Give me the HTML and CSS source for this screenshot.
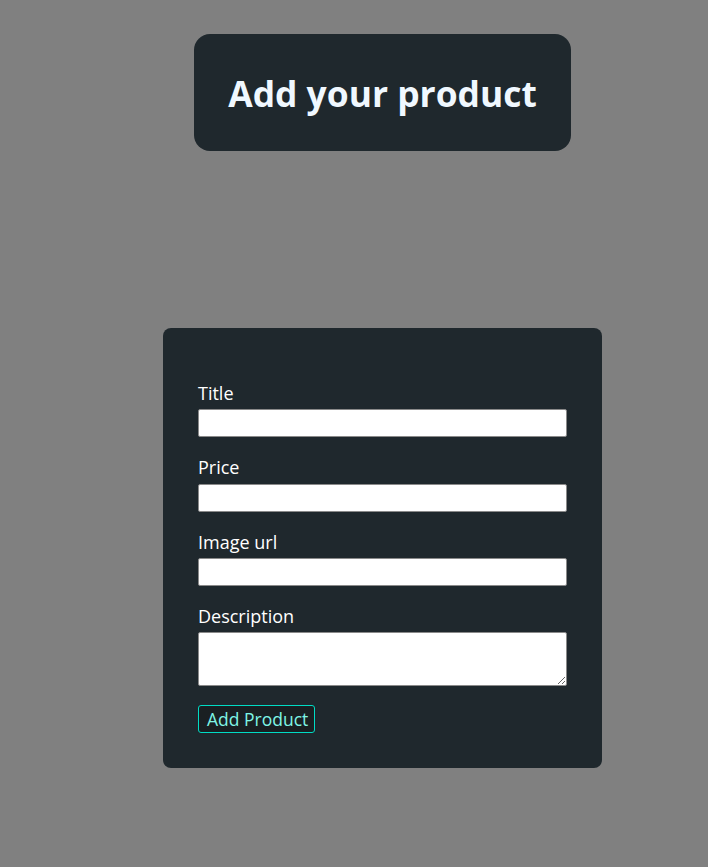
FILE: index.html
```html
<!DOCTYPE html>
<html lang="en">
<head>
<meta charset="utf-8">
<title>Add your product</title>
<link rel="stylesheet" href="styles.css">
</head>
<body>
<main class="page">
  <header class="banner">
    <h1 class="banner-title">Add your product</h1>
  </header>
  <section class="card">
    <form class="product-form">
      <label class="field-label" for="title">Title</label>
      <input class="field-input" id="title" type="text">
      <label class="field-label" for="price">Price</label>
      <input class="field-input" id="price" type="text">
      <label class="field-label" for="image">Image url</label>
      <input class="field-input" id="image" type="text">
      <label class="field-label" for="desc">Description</label>
      <textarea class="field-textarea" id="desc"></textarea>
      <button class="submit-btn" type="button">Add Product</button>
    </form>
  </section>
</main>
</body>
</html>
```
FILE: styles.css
```css
html, body {
  margin: 0;
  padding: 0;
  background: #808080;
  font-family: "Open Sans", "Liberation Sans", sans-serif;
}

.page {
  width: 440px;
  margin-left: 163px;
  padding-top: 34px;
  display: flex;
  flex-direction: column;
  align-items: center;
}

.banner {
  box-sizing: border-box;
  width: 377px;
  height: 117px;
  padding-top: 2px;
  margin-left: -1px;
  background: #1f282d;
  border-radius: 16px;
  display: flex;
  align-items: center;
  justify-content: center;
}

.banner-title {
  margin: 0;
  font-size: 35.4px;
  font-weight: 700;
  line-height: 49px;
  color: #f0f8ff;
  white-space: nowrap;
}

.card {
  margin-top: 177px;
  box-sizing: border-box;
  width: 439px;
  align-self: flex-start;
  background: #1f282d;
  border-radius: 8px;
  padding: 53px 35px 35px;
}

.product-form {
  display: flex;
  flex-direction: column;
  align-items: flex-start;
}

.field-label {
  color: #ffffff;
  font-size: 18px;
  line-height: 24.25px;
  margin-bottom: 4px;
}

.field-input,
.field-textarea {
  box-sizing: border-box;
  width: 369px;
  height: 28px;
  margin: 0 0 18px;
  border: 1px solid #8a8a8a;
  border-radius: 2px;
  background: #ffffff;
  font-family: inherit;
}

.field-textarea {
  height: 54px;
  margin-bottom: 19px;
  resize: both;
}

.submit-btn {
  box-sizing: border-box;
  height: 28px;
  padding: 0 6px 0 8px;
  background: #1a1f22;
  border: 1px solid #00dcc4;
  border-radius: 3px;
  color: #7ff5e6;
  font-family: inherit;
  font-size: 17.5px;
  line-height: 24px;
}
```
